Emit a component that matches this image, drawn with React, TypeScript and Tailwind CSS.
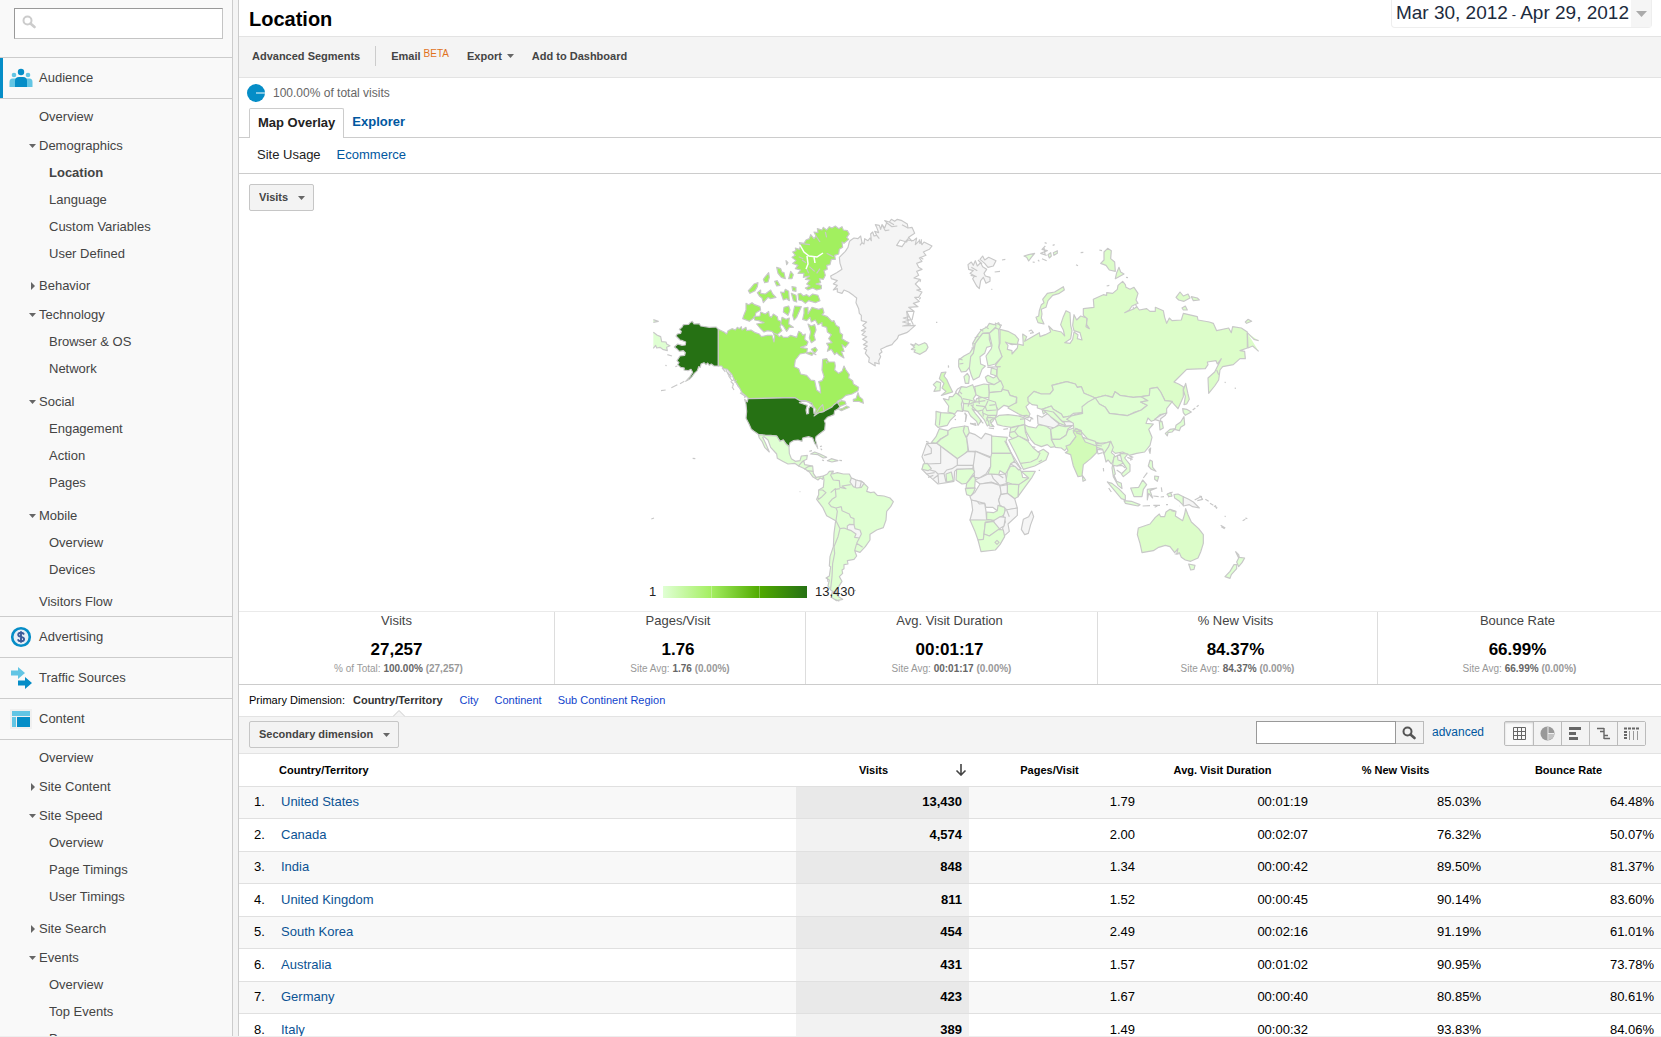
import React from 'react';

type NavItem = { label: string; state?: 'open' | 'closed'; compact?: boolean; children?: string[] };

const audienceItems: NavItem[] = [
  { label: 'Overview' },
  { label: 'Demographics', state: 'open', compact: true, children: ['Location', 'Language', 'Custom Variables', 'User Defined'] },
  { label: 'Behavior', state: 'closed' },
  { label: 'Technology', state: 'open', children: ['Browser & OS', 'Network'] },
  { label: 'Social', state: 'open', children: ['Engagement', 'Action', 'Pages'] },
  { label: 'Mobile', state: 'open', compact: true, children: ['Overview', 'Devices'] },
  { label: 'Visitors Flow' },
];

const contentItems: NavItem[] = [
  { label: 'Overview' },
  { label: 'Site Content', state: 'closed' },
  { label: 'Site Speed', state: 'open', compact: true, children: ['Overview', 'Page Timings', 'User Timings'] },
  { label: 'Site Search', state: 'closed' },
  { label: 'Events', state: 'open', children: ['Overview', 'Top Events', 'Pages'] },
];

const stats = [
  { label: 'Visits', value: '27,257', note: '% of Total:', bold: '100.00%', rest: '(27,257)' },
  { label: 'Pages/Visit', value: '1.76', note: 'Site Avg:', bold: '1.76', rest: '(0.00%)' },
  { label: 'Avg. Visit Duration', value: '00:01:17', note: 'Site Avg:', bold: '00:01:17', rest: '(0.00%)' },
  { label: '% New Visits', value: '84.37%', note: 'Site Avg:', bold: '84.37%', rest: '(0.00%)' },
  { label: 'Bounce Rate', value: '66.99%', note: 'Site Avg:', bold: '66.99%', rest: '(0.00%)' },
];

const rows = [
  ['United States', '13,430', '1.79', '00:01:19', '85.03%', '64.48%'],
  ['Canada', '4,574', '2.00', '00:02:07', '76.32%', '50.07%'],
  ['India', '848', '1.34', '00:00:42', '89.50%', '81.37%'],
  ['United Kingdom', '811', '1.52', '00:00:45', '90.14%', '83.60%'],
  ['South Korea', '454', '2.49', '00:02:16', '91.19%', '61.01%'],
  ['Australia', '431', '1.57', '00:01:02', '90.95%', '73.78%'],
  ['Germany', '423', '1.67', '00:00:40', '80.85%', '80.61%'],
  ['Italy', '389', '1.49', '00:00:32', '93.83%', '84.06%'],
];

const NONE = '#f5f5f5';
const LOW = '#dfffd2';
const RUSSIA = '#dcfdc9';
const INDIA = '#d2fbb8';
const CANADA = '#a2f05f';
const USA = '#267114';

// Each quadrant of the map has its own origin, in thirds of a pixel
const quadrants: { x: number; y: number; shapes: [string, string][] }[] = [
  {
    x: 0,
    y: 0,
    shapes: [
      [USA, 'M157,334 162,342 178,341 182,348 208,352 228,351 235,358 235,468 222,468 214,462 208,466 203,459 198,464 192,458 183,462 181,472 176,470 172,482 163,490 156,500 148,508 137,514 150,500 158,487 153,478 144,482 132,480 133,474 122,472 113,464 117,458 111,452 120,438 134,436 136,428 130,422 118,424 110,416 103,411 113,402 126,406 136,405 137,396 128,392 120,390 108,378 112,372 122,370 124,364 118,358 126,352 130,344 146,343 150,338Z'],
      ['none', 'M133,514 120,521 M112,524 94,533 M77,540 63,542 M82,434 96,438 M76,466 80,467 M106,470 112,468'],
      [LOW, 'M40,367 52,376 62,380 65,395 78,396 80,402 90,407 80,412 82,422 68,418 60,412 50,414 47,406 40,415'],
      [LOW, 'M40,329 55,334 40,337'],
      [CANADA, 'M235,358 252,366 260,372 264,362 276,356 286,360 292,352 298,356 304,350 306,360 318,352 320,362 333,360 346,368 358,372 364,380 382,376 396,376 402,396 404,380 398,364 408,370 418,380 424,376 430,382 444,382 452,376 470,382 476,364 484,368 488,376 496,372 494,388 504,396 500,406 482,412 502,416 500,430 516,436 520,430 528,434 512,426 480,432 466,450 463,470 476,476 482,492 500,496 512,510 524,512 530,540 542,549 540,530 536,515 546,512 552,500 546,480 548,448 560,446 566,456 584,456 586,468 584,480 596,490 606,484 612,468 618,480 628,494 626,504 638,512 640,522 656,532 654,542 636,552 618,556 606,566 592,574 590,580 604,572 615,574 618,582 598,590 594,582 575,592 552,604 538,606 524,620 523,612 528,598 520,588 508,586 496,572 480,574 465,563 326,566 316,556 306,548 300,536 292,524 284,512 276,494 262,478 250,476 245,468 235,468Z'],
      ['none', 'M246,474 256,486 M258,480 266,496 272,492 M266,498 276,512 284,508 M272,514 280,522 278,530 M276,530 282,540 M290,520 296,532 M300,548 318,560 312,562 M284,518 290,510 M264,488 274,502'],
      [CANADA, 'M640,568 648,566 654,548 658,560 668,568 670,580 656,574 640,574Z'],
      [CANADA, 'M596,598 606,596 620,588 628,592 604,602Z'],
      [CANADA, 'M318,280 326,284 336,278 344,284 360,290 362,300 348,308 344,322 328,334 308,326 312,314 318,300Z'],
      [CANADA, 'M342,320 360,318 362,306 376,312 386,304 388,318 394,322 400,312 412,320 414,330 426,336 420,350 426,362 412,374 402,370 396,364 382,362 372,366 360,354 350,342 372,338 356,332 344,330Z'],
      [CANADA, 'M354,218 352,230 345,242 330,250 325,242 334,232 342,222Z'],
      [CANADA, 'M352,248 362,240 362,250 376,252 392,240 398,252 408,262 392,266 384,262 370,278 366,264 358,258Z'],
      [CANADA, 'M386,188 388,202 384,216 374,218 370,208 376,200Z'],
      [CANADA, 'M410,172 422,176 426,186 432,188 436,206 424,202 414,190Z'],
      [CANADA, 'M452,184 460,194 456,206 446,206Z'],
      [CANADA, 'M438,152 444,158 440,164Z'],
      [CANADA, 'M404,214 412,212 420,226 410,228Z'],
      [CANADA, 'M422,246 432,248 436,238 446,244 448,272 440,266 430,270Z'],
      [CANADA, 'M456,230 468,232 468,244 458,242Z'],
      [CANADA, 'M454,250 468,256 470,276 460,272Z'],
      [CANADA, 'M474,252 482,250 490,258 500,254 508,260 518,252 534,256 540,272 526,278 506,272 496,280 486,272 476,270Z'],
      [CANADA, 'M482,106 478,98 492,100 498,90 508,86 512,74 522,86 528,78 522,66 534,68 532,56 546,60 550,52 560,60 568,50 576,54 586,48 596,56 606,50 610,60 622,62 628,72 620,82 626,88 612,100 606,96 608,112 598,118 596,132 584,136 586,148 574,148 570,164 560,166 562,178 552,182 556,196 550,208 538,206 542,218 528,222 544,226 544,236 530,240 518,234 504,240 496,234 510,228 500,222 510,210 496,208 508,198 490,202 492,190 474,190 482,180 466,176 474,166 458,160 468,152 456,142 466,136 458,126 468,122 466,114 478,118Z'],
      ['none', 'M486,150 498,158 M528,78 540,96 M556,66 560,82 M508,170 524,184 M560,130 580,140 M480,100 510,104 M500,176 506,190 M476,140 490,146 M540,176 530,190'],
      [CANADA, 'M432,292 446,288 450,300 444,316 430,306Z'],
      [CANADA, 'M464,288 484,290 476,308 470,322 462,330 458,316Z'],
      [CANADA, 'M426,322 438,328 448,324 446,342 460,352 448,352 440,364 430,348 422,342Z'],
      [CANADA, 'M492,294 504,292 504,312 516,292 536,298 548,294 552,308 546,314 562,320 576,334 582,332 588,346 598,352 600,368 608,374 606,386 618,394 627,398 616,412 606,404 612,424 604,424 612,444 598,436 590,428 584,434 574,418 562,424 566,410 560,400 576,398 566,386 574,374 562,366 560,352 546,348 546,338 534,344 526,330 514,336 510,322 500,332 488,328 492,310Z'],
      [CANADA, 'M504,342 514,348 524,344 528,360 522,376 526,390 514,398 508,384 512,366Z'],
      [CANADA, 'M514,418 526,412 532,420 524,430Z'],
      [CANADA, 'M558,454 562,460'],
      [NONE, 'M630,92 642,84 654,86 662,78 666,98 672,102 674,86 684,92 690,84 694,92 692,72 698,66 702,78 710,76 704,64 716,68 710,52 706,44 718,46 722,58 726,44 734,54 740,38 734,32 748,36 754,28 764,34 772,28 786,32 802,42 804,54 816,52 824,70 806,82 800,96 780,90 770,106 786,110 800,90 820,92 830,84 826,104 838,92 846,104 852,96 876,108 868,118 850,126 858,136 838,144 846,154 830,160 836,172 846,178 830,184 836,196 822,204 840,208 826,222 842,238 830,240 846,246 836,262 824,262 838,274 820,280 834,290 806,292 822,304 800,304 808,320 790,324 810,330 788,336 812,342 788,348 826,346 808,362 800,368 776,376 772,386 762,396 756,404 738,410 722,418 726,426 718,432 722,440 716,452 718,462 704,458 706,468 696,462 686,456 688,444 676,430 680,420 672,416 682,408 670,404 682,396 668,388 680,380 666,374 676,364 664,362 678,354 668,346 680,336 664,332 664,316 658,310 656,296 648,278 650,264 640,256 626,246 612,240 606,250 592,246 592,236 580,240 592,226 580,222 592,212 574,206 572,198 590,188 606,178 600,160 598,142 616,124 624,112 628,96Z'],
      ['none', 'M710,76 718,86 M726,44 736,62 748,60 M740,38 756,50 772,48 M748,36 762,44 M786,44 804,54 M666,98 660,106 M806,82 816,94 M822,304 816,330 M808,320 820,344 M800,304 806,348 M838,88 840,102 M842,208 840,216 M842,262 838,268'],
      [LOW, 'M812,402 824,406 826,400 836,406 854,398 860,402 864,412 858,422 840,433 822,426 826,420 814,418 824,412Z'],
      ['none', 'M888,337 892,337 M925,466 926,472'],
    ],
  },
  {
    x: 0,
    y: 570,
    shapes: [
      [USA, 'M324,-4 465,-7 480,2 494,2 508,6 516,10 520,22 522,40 536,38 552,34 575,22 582,14 590,8 594,10 600,20 592,28 584,32 582,44 562,52 553,62 556,70 554,90 538,102 528,110 526,118 532,140 524,130 518,114 506,110 496,112 488,114 486,124 474,120 460,122 450,128 447,140 438,132 430,120 420,124 410,108 392,106 376,106 355,103 342,94 334,88 326,70 318,55 320,34 318,12 314,-2 322,6Z'],
      ['#fff', 'M478,8 488,4 498,4 508,8 516,14 518,22 510,18 506,26 506,40 500,42 498,30 502,16 490,12Z'],
      [CANADA, 'M522,48 532,34 540,22 548,14 552,34 536,38Z'],
      [LOW, 'M355,104 376,106 410,108 420,124 430,120 438,132 447,140 448,160 454,176 466,184 480,182 484,168 502,166 500,178 488,184 484,192 476,198 464,190 444,192 428,184 412,175 410,162 392,142 384,120 372,110 368,112 376,128 388,156 374,142 366,124 358,114Z'],
      [LOW, 'M476,198 486,186 492,184 494,194 518,198 520,220 528,232 540,230 550,228 548,238 540,234 534,240 518,230 508,216 494,206Z'],
      ['none', 'M492,208 504,200 518,198 M500,212 520,214'],
      [LOW, 'M512,162 524,156 540,162 560,172 550,174 534,164Z'],
      [LOW, 'M562,182 574,176 594,182 576,186Z'],
      ['none', 'M546,180 552,182 M598,181 606,182 M540,140 546,138 M542,146 546,150 M158,175 166,176 M34,357 42,354 M479,275 481,275 M530,138 534,146 M508,154 516,152'],
      [LOW, 'M550,228 562,222 568,214 580,213 578,222 592,218 610,222 628,222 634,234 648,240 664,244 672,250 684,262 680,274 692,278 702,276 712,286 732,288 750,294 760,305 752,320 740,334 738,360 730,383 710,390 690,403 690,420 676,440 660,457 644,452 650,468 642,478 622,482 624,492 612,494 612,506 606,510 608,520 598,530 606,544 596,560 588,568 592,580 574,572 564,558 568,540 558,534 568,528 572,500 568,498 570,470 580,440 582,400 587,362 560,347 548,322 530,298 536,284 536,270 550,262 552,240Z'],
      [NONE, 'M634,234 648,240 664,244 672,250 664,262 650,264 640,260 630,246Z'],
      [NONE, 'M622,378 628,373 642,374 645,386 660,390 664,402 658,414 644,412 648,402 634,392 622,388Z'],
      ['none', 'M648,240 646,262 M664,244 660,262 M578,213 572,226 580,240 598,242 600,262 618,266 606,258 632,254 M586,268 600,266 M572,278 586,266 588,290 576,298 566,310 574,320 588,324 604,320 M536,270 548,270 558,278 544,292 536,298 532,290 M588,324 592,334 588,362 M604,320 606,332 628,342 632,352 642,356 642,374 M588,362 600,386 612,384 622,388 M600,386 594,410 582,440 584,460 578,490 576,530 572,566 M650,430 668,442 M650,430 644,452 M658,414 650,430'],
      [LOW, 'M576,578 588,582 598,592 608,598 590,602 574,592Z'],
      ['none', 'M642,572 648,571 M584,598 598,604 M562,532 564,546'],
    ],
  },
  {
    x: 840,
    y: 0,
    shapes: [
      [NONE, 'M144,164 154,156 160,166 166,152 172,168 182,158 188,170 200,178 192,190 196,198 210,202 210,214 198,220 190,202 182,212 178,236 170,228 158,206 164,198 150,190 160,182 146,178Z'],
      [NONE, 'M180,148 188,138 194,150 206,142 228,152 220,168 204,172 194,160Z'],
      ['none', 'M224,186 240,184 M246,150 256,148 M152,196 170,200 M154,172 172,182 M174,150 186,162 M214,238 217,238 M4,88 4,100 M0,142 10,148 M84,470 86,472'],
      [LOW, 'M312,138 326,134 344,130 334,142 326,153 320,142Z'],
      ['none', 'M374,98 380,100 M376,108 366,118 382,122 362,130 380,136 M372,112 376,138 M366,146 380,152 M338,156 344,157 M398,106 404,104 M482,128 490,127 M468,164 474,167 M538,120 546,122 M560,228 568,226 M618,202 624,203 M354,150 358,154'],
      [LOW, 'M384,134 392,128 394,138 388,144Z'],
      [LOW, 'M400,128 412,122 412,130 402,136Z'],
      [RUSSIA, 'M430,230 433,240 418,250 398,256 384,272 378,292 364,298 366,312 364,324 372,342 354,338 348,322 356,318 358,302 364,284 372,278 368,268 382,250 404,246Z'],
      [RUSSIA, 'M563,115 574,122 572,146 584,156 586,184 568,180 558,166 542,160 552,150 552,126Z'],
      [RUSSIA, 'M597,172 602,186 612,192 586,206 590,188Z'],
      [RUSSIA, 'M768,262 780,246 790,258 804,252 810,264 792,274 776,270Z'],
      [RUSSIA, 'M814,260 832,264 838,270 820,272Z'],
      [RUSSIA, 'M786,294 796,288 802,300 790,300Z'],
      [RUSSIA, 'M976,336 984,328 995,334 980,340Z'],
      [RUSSIA, 'M240,358 264,364 286,376 296,388 292,402 276,404 256,396 264,406 262,418 276,422 276,432 292,414 294,402 310,406 308,372 320,380 314,394 358,368 360,380 376,374 392,366 386,348 398,360 424,366 434,378 430,360 422,344 430,320 438,302 450,308 452,346 456,362 452,386 434,398 450,400 458,388 462,366 474,374 472,386 486,390 480,368 462,362 458,346 462,314 470,330 482,318 500,324 500,344 508,356 498,350 502,326 490,316 490,296 522,292 520,268 550,254 560,256 560,248 578,250 592,238 594,226 608,214 616,224 618,232 630,238 642,232 654,250 648,270 654,280 636,288 628,300 614,308 642,296 650,290 658,300 680,296 690,304 706,304 706,292 730,302 734,322 740,340 748,324 756,332 784,330 790,310 832,320 834,330 868,336 880,340 890,362 926,354 934,368 938,350 964,354 982,366 982,414 960,422 974,424 976,446 960,446 940,464 908,470 900,480 896,510 884,528 866,550 864,504 884,486 904,446 892,462 888,452 862,456 864,464 856,476 800,478 774,504 762,516 776,522 790,530 790,560 774,596 755,575 735,572 722,546 712,532 690,536 688,556 664,560 640,562 600,556 585,545 578,562 556,556 526,564 512,558 492,550 484,530 472,532 466,522 440,515 396,526 400,540 390,552 364,552 342,544 324,562 328,580 318,590 330,612 324,624 296,612 264,594 270,584 290,578 290,562 270,556 264,542 248,544 248,530 240,515 230,500 232,472 226,466 246,440 236,412 240,400Z'],
      ['none', 'M268,400 290,404 M326,364 334,360 340,368 330,370 M646,282 652,294 M640,290 640,298 M890,480 896,494 M944,534 948,535 M914,516 917,518'],
      [RUSSIA, 'M982,368 1002,388 1016,392 M1016,424 998,408 984,414 982,368'],
      [RUSSIA, 'M797,520 804,552 808,568 800,582 792,584 796,560 790,540Z'],
      [LOW, 'M116,450 132,438 150,428 160,412 158,400 172,376 184,360 202,350 208,340 222,344 236,338 242,350 236,360 226,352 210,368 188,370 176,386 166,400 160,430 152,440 152,468 138,484 124,486 116,470Z'],
      ['none', 'M118,462 130,460 M116,446 128,450 M160,400 170,404 M164,384 176,378 M180,358 190,364 M196,350 206,356 M226,338 228,350 M232,342 246,346 M154,414 164,414'],
      [LOW, 'M188,370 208,370 208,388 214,408 200,412 194,430 180,440 182,462 196,468 186,478 178,500 160,510 154,496 148,476 152,440 160,430 166,400 176,386Z'],
      [LOW, 'M208,370 226,354 236,358 238,400 236,412 246,440 226,462 204,468 198,438 214,416 216,406Z'],
      [LOW, 'M202,472 242,470 M214,474 230,478 230,498 212,492 Z'],
      [LOW, 'M196,502 204,496 220,504 230,498 240,515 222,524 202,516Z'],
      [LOW, 'M132,500 142,490 148,500 146,520 136,520Z'],
      [INDIA, 'M64,488 78,486 72,498 80,508 88,526 98,546 84,550 64,556 78,544 66,534 72,520 58,506Z'],
      [LOW, 'M40,524 50,514 62,518 60,542 42,544 48,532Z'],
      [LOW, 'M70,566 86,570 88,560 98,560 108,548 124,560 130,566 124,582 128,604 112,602 104,612 84,606 86,588Z'],
      [LOW, 'M124,530 140,532 158,524 164,540 168,554 160,566 166,576 148,582 130,580 124,562 114,552Z'],
      [LOW, 'M164,530 192,522 206,524 208,548 208,562 188,564 168,554Z'],
      [LOW, 'M206,522 222,524 242,512 250,530 244,544 208,548Z'],
      [LOW, 'M208,548 244,544 248,538 264,542 270,556 290,562 288,578 266,590 252,586 234,600 226,584 206,570Z'],
      [LOW, 'M130,580 148,582 166,576 170,566 186,562 206,570 226,576 232,600 230,616 218,634 210,642 202,648 192,628 172,604 156,596 166,610 184,632 174,646 170,634 152,618 144,604 130,602Z'],
      ['none', 'M128,566 150,570 168,576 M150,570 144,590 M166,576 196,572 M168,586 196,590 204,572 M196,590 200,602 230,600 M172,604 188,600 196,590 M186,608 204,616 230,616 M188,600 190,620 M204,616 200,634 M160,580 158,594 M176,560 178,582 M208,586 226,584 M152,584 172,604 M106,548 112,538 124,530 M118,544 126,552'],
      [LOW, 'M48,604 64,608 98,610 106,616 90,632 82,646 54,652 46,644 48,624Z'],
      ['none', 'M62,608 58,646 M134,608 140,616 136,636 M150,640 168,642'],
      [LOW, 'M324,562 342,544 364,552 390,552 400,540 396,526 440,515 466,522 472,532 484,530 492,550 512,558 526,564 508,576 504,592 488,596 486,608 460,610 450,618 430,622 424,612 400,598 394,588 366,598 352,594 352,586 336,584 324,574Z'],
      [LOW, 'M366,598 394,588 400,598 424,612 430,622 450,618 486,608 470,628 450,636 430,636 410,622 392,612 382,604 370,612Z'],
      [LOW, 'M526,564 556,556 578,562 585,545 600,556 640,562 664,560 684,572 662,576 682,586 664,600 640,608 622,617 568,610 556,592 538,582Z'],
      [LOW, 'M788,596 800,598 814,606 796,616 790,608Z'],
      ['none', 'M818,600 826,594 M830,590 836,586'],
    ],
  },
  {
    x: 840,
    y: 570,
    shapes: [
      [LOW, 'M58,86 84,92 84,104 60,118 48,130 34,128 48,110Z'],
      [LOW, 'M84,92 96,84 134,78 130,92 140,112 144,152 130,166 112,176 50,130 62,118 84,104Z'],
      [LOW, 'M134,78 144,80 148,98 138,112 130,94Z'],
      [NONE, 'M140,112 148,98 166,104 184,116 196,100 215,106 215,172 168,154 146,154Z'],
      [LOW, 'M215,108 262,112 258,124 274,160 215,160Z'],
      [NONE, 'M20,130 50,130 112,176 144,154 166,156 168,184 160,196 158,208 110,208 104,214 102,244 80,248 54,252 36,236 20,222 6,208 14,188 6,170Z'],
      ['none', 'M62,138 62,190 20,192 M20,130 34,146 34,160 12,166 M112,176 112,196 96,206 80,210 72,220 54,222 M30,210 46,214 54,222 56,250 M72,220 78,246 M20,222 44,218 M40,236 54,226 M112,196 160,196 M24,232 40,226'],
      [LOW, 'M10,192 22,190 34,206 24,212 6,208Z'],
      [NONE, 'M166,154 212,174 212,200 198,222 178,234 164,232 160,196Z'],
      [LOW, 'M78,222 94,216 100,242 80,246Z'],
      [LOW, 'M215,160 274,160 284,184 272,192 262,214 256,222 240,212 236,224 204,222 212,200 212,174Z'],
      [NONE, 'M164,240 184,232 204,222 236,224 256,222 262,250 240,256 214,246 180,252Z'],
      ['none', 'M214,222 220,236 236,252 M236,224 250,234'],
      [LOW, 'M262,214 272,198 290,200 304,214 308,232 326,234 300,254 276,252 258,246Z'],
      [NONE, 'M272,192 284,184 302,206 296,210 286,200Z'],
      [LOW, 'M304,214 346,214 336,232 314,262 294,290 296,254 326,234Z'],
      [LOW, 'M110,208 158,206 164,216 154,230 140,250 126,252 108,240Z'],
      [LOW, 'M140,250 160,226 166,236 164,264 138,264Z'],
      [LOW, 'M136,266 166,264 160,278 152,288 140,284Z'],
      [LOW, 'M262,252 296,254 294,290 284,296 262,280Z'],
      [NONE, 'M180,252 214,248 240,256 244,278 236,300 242,318 232,332 218,322 198,322 194,310 154,300 150,290 164,278Z'],
      [NONE, 'M240,258 262,254 262,280 244,284Z'],
      [NONE, 'M242,284 262,280 284,296 292,324 262,330 240,316 236,300Z'],
      [NONE, 'M154,300 172,304 178,312 194,310 198,334 200,362 150,360 158,330Z'],
      [LOW, 'M200,336 220,338 232,332 234,316 254,322 256,342 226,362 200,358Z'],
      [NONE, 'M256,330 292,324 292,346 264,372 268,394 250,410 248,384 256,366 250,348Z'],
      [NONE, 'M218,364 240,350 256,352 252,378 236,388Z'],
      [LOW, 'M150,360 212,360 222,364 196,366 190,418 174,420 164,392Z'],
      [LOW, 'M196,368 220,364 240,388 208,408 192,402Z'],
      [LOW, 'M174,420 190,418 192,402 208,408 236,388 250,390 254,410 240,434 226,450 183,455Z'],
      ['none', 'M225,427 231,421 237,427 231,433Z M260,330 268,350'],
      [NONE, 'M335,333 341,350 332,374 325,400 314,404 304,388 310,358 326,350Z'],
      [LOW, 'M225,54 238,46 264,44 296,48 314,54 314,74 290,78 274,82 248,78 232,74Z'],
      [LOW, 'M200,54 210,52 222,54 210,62 214,72 222,80 208,78 206,66Z'],
      ['none', 'M206,84 222,86 M250,88 264,86 M104,58 108,59 M134,40 138,46 136,66 M150,70 168,76 164,68 M180,60 190,70'],
      [LOW, 'M268,108 272,84 314,74 316,96 326,122 300,110 278,116Z'],
      ['none', 'M268,98 284,94 296,78 M284,94 296,110 M296,48 320,46 340,58 M314,54 330,64 336,52 M300,58 316,56'],
      [LOW, 'M266,120 278,116 296,108 324,124 340,144 354,156 370,148 386,160 378,180 344,198 310,208 302,192 286,158Z'],
      ['none', 'M302,190 332,186 352,176 360,160 354,156 M336,140 346,142 M366,180 356,186 M254,122 272,156 304,208 M356,211 360,211'],
      [LOW, 'M314,74 326,80 348,84 356,74 378,78 392,88 394,118 406,140 392,142 382,134 364,140 344,132 332,118 318,94Z'],
      [NONE, 'M352,46 366,52 384,40 398,56 418,72 404,84 378,78 354,72Z'],
      [LOW, 'M370,30 400,36 428,66 440,68 434,76 418,70 392,50Z'],
      [NONE, 'M430,64 460,66 462,76 438,78Z'],
      [LOW, 'M392,88 418,76 436,80 460,76 444,86 438,106 420,118 396,118Z'],
      [LOW, 'M394,118 420,118 438,106 444,90 466,82 478,92 468,98 468,110 450,134 434,152 424,144 406,142Z'],
      [LOW, 'M526,-6 538,12 556,22 568,40 622,47 664,30 682,16 662,6 684,2 664,-10 688,-14 690,-34 712,-38 722,-24 735,2 757,4 740,26 740,40 720,44 704,60 694,64 684,54 678,70 700,72 686,88 696,112 690,136 674,156 650,160 628,166 608,156 586,160 572,148 572,126 540,130 508,122 486,98 462,90 460,70 440,58 454,48 488,40 486,20 504,6Z'],
      [INDIA, 'M468,86 484,92 486,108 496,124 530,138 530,158 512,176 490,194 486,228 474,230 460,198 452,164 436,158 444,152 438,138 450,134 468,110 460,96Z'],
      [LOW, 'M488,112 526,124 530,138 496,126Z'],
      [LOW, 'M530,130 548,132 572,124 564,146 552,162 548,148 530,142Z'],
      ['none', 'M530,142 534,162 548,158 M532,148 548,150 M530,136 546,138 M458,92 480,96 M466,84 484,96 M468,98 484,104'],
      [LOW, 'M487,226 497,240 489,244Z'],
      [LOW, 'M552,160 566,140 572,124 580,142 574,158 584,166 578,186 574,192 564,180 558,186Z'],
      [LOW, 'M582,172 598,164 610,176 610,190 590,198 580,196 586,222 582,226 590,244 604,250 606,266 594,256 580,230 576,204Z'],
      [NONE, 'M592,166 606,166 608,184 594,180Z'],
      [LOW, 'M600,160 624,162 614,174 630,194 630,214 610,230 604,222 620,206 606,184Z'],
      ['none', 'M590,198 606,196 616,204 M590,210 604,220 M622,172 638,178 M628,168 640,172 M632,182 634,168 M550,204 551,214'],
      [LOW, 'M562,246 576,250 596,266 616,286 616,300 604,296 582,270Z'],
      [LOW, 'M612,302 634,304 660,314 654,318 616,310Z'],
      [LOW, 'M632,264 656,262 668,240 680,254 670,268 666,290 642,290Z'],
      [LOW, 'M682,268 710,264 690,272 698,294 686,280 682,300Z'],
      ['none', 'M668,318 690,317 M700,316 720,316 M704,322 712,318 M738,314 744,314 M724,262 726,276 M700,288 716,290 M722,291 732,290 M670,234 682,218 M566,264 574,276 M740,284 758,276 M744,290 756,288 M778,318 779,318'],
      [LOW, 'M690,180 697,184 698,202 708,214 694,208 685,198Z'],
      [LOW, 'M704,228 716,230 712,244 704,238Z'],
      [LOW, 'M687,150 692,144 690,160Z'],
      [LOW, 'M742,282 752,278 756,288 746,290Z'],
      [LOW, 'M762,284 774,282 790,290 790,316 776,302 764,294Z'],
      [NONE, 'M790,290 806,298 820,306 838,324 818,320 808,314 790,318Z'],
      ['none', 'M824,300 842,290 848,298 832,302 M838,288 846,290 M856,298 866,304 M870,310 880,316 M882,318 892,324 M886,316 890,326 M902,376 916,384 M904,380 914,386 M914,348 917,350 M968,362 976,358 M976,354 982,356'],
      [NONE, 'M704,58 722,46 740,38 736,46 722,56 722,64Z'],
      [LOW, 'M718,66 726,64 730,84 720,90Z'],
      [LOW, 'M792,50 794,74 782,82 778,92 764,88 756,96 744,98 742,108 736,100 750,88 766,86 768,76 782,66Z'],
      [RUSSIA, 'M655,384 690,372 706,352 718,342 722,350 734,350 738,336 750,328 768,334 766,348 788,362 794,342 797,326 804,344 814,366 836,386 850,404 850,430 842,456 834,474 812,484 796,480 784,472 778,458 770,462 774,446 764,458 750,440 736,436 716,442 700,452 666,458 660,430 652,404Z'],
      ['none', 'M764,462 776,462 M754,332 764,334'],
      [LOW, 'M806,492 825,496 822,508 812,510Z'],
      [LOW, 'M947,455 956,464 958,472 974,474 966,488 956,500 950,486 956,474Z'],
      [LOW, 'M942,494 950,494 950,506 934,524 930,535 915,530 930,514Z'],
      ['none', 'M18,124 26,127'],
    ],
  },
];

const WorldMap: React.FC = () => (
  <svg viewBox="0 1 620 400" className="block mx-auto w-[620px] max-w-full h-auto" role="img" aria-label="Visits by country">
    <defs>
      <linearGradient id="scale">
        <stop offset="0" stopColor="#e0ffd4" />
        <stop offset="0.33" stopColor="#a5ef63" />
        <stop offset="0.67" stopColor="#50aa00" />
        <stop offset="1" stopColor="#267114" />
      </linearGradient>
    </defs>
    {quadrants.map((q, i) => (
      <g key={i} transform={`scale(0.33333) translate(${q.x} ${q.y})`} stroke="#c8c8c8" strokeWidth="3.5" strokeLinejoin="round">
        {q.shapes.map(([fill, d]) => (
          <path key={d} fill={fill} d={d} />
        ))}
      </g>
    ))}
    {/* sound between Ellesmere and Axel Heiberg */}
    <path d="M160 35l4 7 5 4 8 1 6-4M167 46l1 8-2 5M174 47l1 6" fill="none" stroke="#fff" strokeWidth="1.5" />
    <rect x="23" y="376" width="144" height="12" fill="url(#scale)" />
    <path d="M71.5 376v12M119.5 376v12" stroke="#fff" strokeOpacity="0.3" />
    <text x="9" y="386" fontSize="13" fill="#222">1</text>
    <text x="175" y="386" fontSize="13" fill="#222">13,430</text>
  </svg>
);

const Caret: React.FC<{ className?: string }> = ({ className = '' }) => (
  <svg viewBox="0 0 7 4" className={`w-[7px] h-1 shrink-0 ${className}`} fill="currentColor" aria-hidden="true">
    <path d="M0 0h7L3.5 4z" />
  </svg>
);

const RightCaret = () => (
  <svg viewBox="0 0 4 8" className="w-1 h-2 ml-[2px]" fill="currentColor" aria-hidden="true">
    <path d="M0 0v8l4-4z" />
  </svg>
);

const SearchIcon: React.FC<{ className?: string }> = ({ className = '' }) => (
  <svg viewBox="0 0 14 14" className={`w-[14px] h-[14px] ${className}`} fill="none" stroke="currentColor" aria-hidden="true">
    <circle cx="5.5" cy="5.5" r="4" strokeWidth="2" />
    <path d="M8.5 8.5l4 3.5" strokeWidth="2.6" strokeLinecap="round" />
  </svg>
);

const AudienceIcon = () => (
  <svg viewBox="0 0 24 20" className="w-6 h-5" aria-hidden="true">
    <g fill="#62c5e4">
      <circle cx="5" cy="7" r="2.3" />
      <circle cx="19" cy="7" r="2.3" />
      <path d="M.5 19v-5q0-3.5 3-3.5h4V19zM23.500 19v-5q0-3.500-3-3.500h-4V19z" />
    </g>
    <circle cx="12" cy="4" r="3.2" fill="#058dc7" />
    <path d="M6 19v-6q0-4 4-4h4q4 0 4 4v6z" fill="#058dc7" />
  </svg>
);

const AdvertisingIcon = () => (
  <svg viewBox="0 0 24 20" className="w-6 h-5 overflow-visible" aria-hidden="true">
    <circle cx="12" cy="10" r="8.8" fill="#e6eef6" stroke="#058dc7" strokeWidth="2.6" />
    <path d="M15 7.5q-.8-1.7-3-1.7-2.8 0-2.8 2 0 1.5 2.8 2.1 3.1.6 3.1 2.3 0 2-3.1 2-2.5 0-3.2-1.9M12 4.3v11.4" fill="none" stroke="#3c5a99" strokeWidth="1.9" />
  </svg>
);

const TrafficIcon = () => (
  <svg viewBox="0 0 24 20" className="w-6 h-5 overflow-visible" aria-hidden="true">
    <path d="M2 2.5h7V-1l7 6-7 6V7.5H2z" fill="#62c5e4" />
    <path d="M9 12.5h7V9l7 6-7 6v-3.5H9z" fill="#058dc7" />
  </svg>
);

const ContentIcon = () => (
  <svg viewBox="0 0 24 20" className="w-6 h-5" aria-hidden="true">
    <path d="M1 0h22v20H1z" fill="#f0f0f0" />
    <path d="M3 2h18v5H3zM3 8h4v10H3z" fill="#62c5e4" />
    <path d="M8 8h13v10H8z" fill="#058dc7" />
  </svg>
);

const SectionHeader: React.FC<{ icon: React.ReactNode; label: string; active?: boolean }> = ({ icon, label, active }) => (
  <a
    href="#"
    className={`flex items-center h-[41px] border-t border-[#ccc] text-[13px] ${active ? 'bg-[linear-gradient(to_right,#058dc7_3px,transparent_3px)]' : ''}`}
  >
    <span className="pl-[9px] w-[39px]">{icon}</span>
    {label}
  </a>
);

const NavList: React.FC<{ items: NavItem[] }> = ({ items }) => (
  <ul className="flex flex-col gap-[2px] pt-1 border-t border-[#ccc] leading-[27px]">
    {items.map(item => (
      <li key={item.label}>
        <a href="#" className="flex items-center pl-[29px]">
          <span className="w-[10px] text-[#666]">
            {item.state === 'open' && <Caret />}
            {item.state === 'closed' && <RightCaret />}
          </span>
          {item.label}
        </a>
        {item.children && (
          <ul className={item.compact ? 'pb-[3px]' : 'pb-1'}>
            {item.children.map(child => (
              <li key={child}>
                <a href="#" className={`block pl-[49px] ${child === 'Location' ? 'font-bold' : ''}`}>{child}</a>
              </li>
            ))}
          </ul>
        )}
      </li>
    ))}
  </ul>
);

const Sidebar: React.FC = () => (
  <aside className="w-[233px] shrink-0 bg-[#f9f9f9] border-r border-[#ccc] text-[13px] text-[#444] overflow-hidden">
    <div className="pt-2 pl-[14px] pr-[9px] pb-[18px]">
      <label className="flex items-center h-[31px] px-[7px] bg-white border border-[#c4c4c4] border-t-[#999] border-l-[#999]">
        <SearchIcon className="text-[#ccc] -mt-1" />
        <input type="search" aria-label="Find reports" className="min-w-0 flex-1 px-2 outline-none" />
      </label>
    </div>
    <SectionHeader icon={<AudienceIcon />} label="Audience" active />
    <NavList items={audienceItems} />
    <div className="pt-px">
      <SectionHeader icon={<AdvertisingIcon />} label="Advertising" />
      <SectionHeader icon={<TrafficIcon />} label="Traffic Sources" />
      <SectionHeader icon={<ContentIcon />} label="Content" />
    </div>
    <NavList items={contentItems} />
  </aside>
);

const Dropdown: React.FC<{ label: string; name: string }> = ({ label, name }) => (
  <span className="relative inline-flex items-center text-[#444]">
    <select
      aria-label={name}
      className="appearance-none h-[27px] pl-[9px] pr-6 bg-[#f3f3f3] border border-[#c6c6c6] rounded-[2px] text-[11px] font-bold"
    >
      <option>{label}</option>
    </select>
    <Caret className="absolute right-[9px] text-[#666] pointer-events-none" />
  </span>
);

const viewIcons = [
  {
    name: 'Table',
    icon: <path d="M.5.5h12v12H.5zM4.5.5v12M8.5.5v12M.5 4.5h12M.5 8.5h12" fill="none" stroke="#666" />,
  },
  {
    name: 'Percentage',
    icon: (
      <>
        <circle cx="6.5" cy="6.5" r="7" fill="#999" />
        <path d="M7.5 7v6a6.500 6.500 0 0 0 6-6z" fill="#c4c4c4" />
        <path d="M7 0v13M7 6.5h6" stroke="#eee" />
      </>
    ),
  },
  { name: 'Performance', icon: <path d="M0 0h12v3H0zM0 5h7v3H0zM0 10h9v3H0z" fill="#666" /> },
  { name: 'Comparison', icon: <path d="M0 1.5h7M3 4.500h4M7 8.5h4M7 11.5h6M7 1v11" fill="none" stroke="#666" strokeWidth="1.4" /> },
  {
    name: 'Pivot',
    icon: (
      <>
        <path d="M-1 1.5h15" stroke="#666" strokeWidth="2" strokeDasharray="3 1" />
        <path d="M.5 4v9" stroke="#666" strokeWidth="3" strokeDasharray="2 1" />
        <path d="M4.5 4v9M8.5 4v9M12.5 4v9" stroke="#999" />
      </>
    ),
  },
];

const DataTable: React.FC = () => (
  <table className="w-full table-fixed border-collapse text-[13px] text-black">
    <thead>
      <tr className="h-8 border-b border-[#e0e0e0] text-[11px]">
        <th className="w-[34px]" />
        <th className="pl-[6px] text-left">Country/Territory</th>
        <th className="w-[173px]">
          <span className="flex items-center pr-[2px]">
            <span className="flex-1 pr-1">Visits</span>
            <svg viewBox="0 0 12 12" className="w-3 h-3" fill="none" stroke="#444" strokeWidth="1.6" aria-label="Sorted descending">
              <path d="M6 0v11M1.5 6.500L6 11l4.5-4.500" />
            </svg>
          </span>
        </th>
        <th className="w-[173px] pr-3">Pages/Visit</th>
        <th className="w-[173px] pr-3">Avg. Visit Duration</th>
        <th className="w-[173px] pr-3">% New Visits</th>
        <th className="w-[173px] pr-3">Bounce Rate</th>
      </tr>
    </thead>
    <tbody>
      {rows.map(([country, visits, ...rest], i) => (
        <tr key={country} className="group border-b border-[#e0e0e0] odd:h-[32px] even:h-[33px] odd:bg-[#f8f8f8]">
          <td className="pl-[15px]">{i + 1}.</td>
          <td className="pl-2">
            <a href="#" className="text-[#0b5394]">{country}</a>
          </td>
          <td className="pr-[7px] text-right font-bold group-odd:bg-[#e9e9e9] group-even:bg-[#f2f2f2]">{visits}</td>
          {rest.map((cell, c) => (
            <td key={c} className="pr-[7px] text-right">{cell}</td>
          ))}
        </tr>
      ))}
    </tbody>
  </table>
);

const App: React.FC = () => {
  return (
    <div className="flex h-screen overflow-hidden bg-[#f4f4f4] border-b border-[#eee] font-['Liberation_Sans',Arial,sans-serif]">
      <Sidebar />
      <main className="flex-1 min-w-0 ml-[5px] bg-white border-l border-[#ccc] overflow-hidden">
        <header className="flex justify-between items-start h-9 pl-[10px] pr-[9px]">
          <h1 className="text-[20px] leading-[38px] font-bold text-black">Location</h1>
          <button type="button" className="flex h-7 border border-t-0 border-[#eee] rounded-b-[4px] text-[19px] leading-[25px] text-[#1c2b3d]">
            <span className="pl-1 pr-[2px]">
              Mar 30, 2012<span className="px-1 text-[13px]">-</span>Apr 29, 2012
            </span>
            <span className="flex items-center w-5 h-full justify-center bg-[#f5f5f5] text-[#aaa]">
              <svg viewBox="0 0 11 6" className="w-[11px] h-[6px]" fill="currentColor" aria-hidden="true">
                <path d="M0 0h11L5.5 6z" />
              </svg>
            </span>
          </button>
        </header>

        <div className="flex items-center h-[42px] pl-[13px] pb-[2px] bg-[#f4f4f4] border-y border-[#e3e3e3] text-[11px] font-bold text-[#444]">
          <button type="button" className="pr-[15px]">Advanced Segments</button>
          <span className="h-5 border-l border-[#ccc] mr-[15px]" />
          <button type="button" className="mr-[18px]">
            Email <sup className="text-[10px] font-normal text-[#e0721d] top-[-3px]">BETA</sup>
          </button>
          <button type="button" className="flex items-center gap-[5px] mr-[18px]">
            Export <Caret className="text-[#666]" />
          </button>
          <button type="button">Add to Dashboard</button>
        </div>

        <div className="flex items-center h-[30px] pl-2 gap-2 text-[12px] text-[#666]">
          <svg viewBox="0 0 18 18" className="w-[18px] h-[18px]" aria-hidden="true">
            <circle cx="9" cy="9" r="9" fill="#058dc7" />
            <path d="M9 9h9" stroke="#fff" />
          </svg>
          100.00% of total visits
        </div>

        <div className="flex h-[30px] pl-[10px] border-b border-[#ccc] text-[13px] font-bold">
          <button type="button" className="h-[30px] px-2 pb-[2px] bg-white border border-b-0 border-[#ccc] rounded-t-[2px] text-[#222]">Map Overlay</button>
          <button type="button" className="px-2 pb-px text-[#0057a0]">Explorer</button>
        </div>

        <div className="flex items-center h-9 pl-[18px] pb-[2px] gap-4 border-b border-[#ccc] text-[13px]">
          <span className="text-[#222]">Site Usage</span>
          <a href="#" className="text-[#0057a0]">Ecommerce</a>
        </div>

        <div className="flex pt-[10px] pl-[10px]">
          <Dropdown name="Metric" label="Visits" />
        </div>

        <WorldMap />

        <section className="grid grid-cols-[316fr_251fr_292fr_280fr_283fr] border-t border-[#eaeaea] border-b border-b-[#ccc] text-center">
          {stats.map(stat => (
            <div key={stat.label} className="h-[72px] border-r border-[#ddd] pr-1 first:pr-0 last:border-r-0">
              <div className="text-[13px] leading-[18px] text-[#444]">{stat.label}</div>
              <div className="pt-2 text-[17px] leading-6 font-bold text-black">{stat.value}</div>
              <div className="pl-1 text-[10px] leading-[14px] text-[#999]">
                {stat.note} <b className="text-[#666]">{stat.bold}</b> <b>{stat.rest}</b>
              </div>
            </div>
          ))}
        </section>

        <nav className="flex items-center h-[31px] pl-[10px] text-[11px]">
          <span className="pr-2 text-black">Primary Dimension:</span>
          <span className="relative flex items-center h-full pr-[17px]">
            <b className="text-[#333]">Country/Territory</b>
            <svg viewBox="0 0 12 7" className="absolute left-[40px] -bottom-px w-3 h-[7px]" aria-hidden="true">
              <path d="M0 6.5L6 .5l6 6" fill="#f4f4f4" stroke="#ccc" />
            </svg>
          </span>
          <a href="#" className="pr-4 text-[#1144cc]">City</a>
          <a href="#" className="pr-4 text-[#1144cc]">Continent</a>
          <a href="#" className="text-[#1144cc]">Sub Continent Region</a>
        </nav>

        <div className="flex items-start h-[38px] pt-1 pl-[10px] pr-[15px] bg-[#f4f4f4] border-y border-[#e3e3e3]">
          <Dropdown name="Secondary dimension" label="Secondary dimension" />
          <div className="flex ml-auto h-[23px]">
            <input type="search" aria-label="Filter rows" className="w-[140px] px-1 bg-white border border-[#999] outline-none text-[12px]" />
            <button type="button" aria-label="Search" className="w-7 border border-l-0 border-[#bbb] bg-[#f3f3f3] flex items-center justify-center">
              <SearchIcon className="text-[#555]" />
            </button>
          </div>
          <a href="#" className="pl-2 pr-5 text-[12px] leading-[23px] text-[#0057a0]">advanced</a>
          <div className="flex h-[25px] border border-[#bbb] rounded-[2px]">
            {viewIcons.map((view, i) => (
              <button
                key={view.name}
                type="button"
                aria-label={view.name}
                className={`flex items-center justify-center w-7 border-l border-[#bbb] first:border-l-0 ${i === 0 ? 'bg-[#f9f9f9] shadow-[inset_0_1px_2px_#ccc]' : 'bg-[#f3f3f3]'}`}
              >
                <svg viewBox="0 0 13 13" className="w-[13px] h-[13px] overflow-visible" aria-hidden="true">{view.icon}</svg>
              </button>
            ))}
          </div>
        </div>

        <DataTable />
      </main>
    </div>
  );
};

export default App;
